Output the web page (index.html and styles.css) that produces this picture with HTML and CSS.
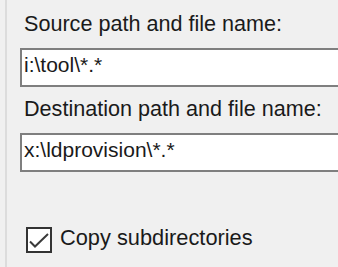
FILE: index.html
```html
<!DOCTYPE html>
<html lang="en">
<head>
<meta charset="UTF-8">
<meta name="viewport" content="width=device-width, initial-scale=1.0">
<title>Copy options</title>
<link rel="stylesheet" href="styles.css">
</head>
<body>

<div class="panel">
  <!-- source -->
  <div class="label">Source path and file name:</div>
  <div class="field">i:\tool\*.*</div>

  <!-- destination -->
  <div class="label label-second">Destination path and file name:</div>
  <div class="field">x:\ldprovision\*.*</div>

  <!-- options -->
  <div class="check-row">
    <span class="check-box">
      <svg width="22" height="22" viewBox="0 0 22 22">
        <polyline points="2,12.5 7,17.5 20,5" fill="none" stroke="#3a3a3a" stroke-width="2"/>
      </svg>
    </span>
    <span class="check-text">Copy subdirectories</span>
  </div>
</div>

</body>
</html>
```

FILE: styles.css
```css
body {
  margin: 0;
  background-color: #f0f0f0;
  font-family: "Liberation Sans", Arial, sans-serif;
  font-size: 21px;
  color: #1a1a1a;
  overflow: hidden;
  height: 267px;
}
.panel {
  margin-left: 5px;
  border-left: 2px solid #dcdcdc;
  padding-left: 13px;
  padding-top: 12px;
  height: 255px;
}
.label {
  font-size: 21.6px;
  line-height: 24px;
  padding-left: 4px;
  margin-bottom: 12px;
  white-space: nowrap;
}
.label-second {
  margin-top: 10px;
}
.field {
  box-sizing: border-box;
  height: 39px;
  border: 2px solid #7f7f7f;
  border-right: none;
  background-color: #fff;
  line-height: 24px;
  padding: 3px 0 0 2px;
  white-space: nowrap;
  overflow: hidden;
}
.check-row {
  display: flex;
  align-items: flex-start;
  margin-top: 55px;
  margin-left: 6px;
  gap: 8px;
}
.check-box {
  box-sizing: border-box;
  width: 26px;
  height: 26px;
  border: 2px solid #333;
  background-color: #fff;
  display: flex;
  align-items: center;
  justify-content: center;
}
.check-text {
  font-size: 21.8px;
  line-height: 24px;
  margin-top: -1px;
  white-space: nowrap;
}
```
